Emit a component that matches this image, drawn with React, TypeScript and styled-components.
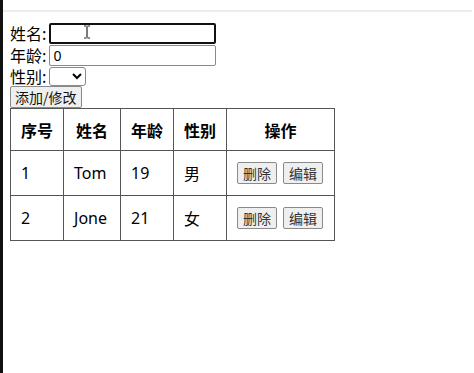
import React, { useState } from "react";
import styled, { createGlobalStyle } from "styled-components";

const GlobalStyle = createGlobalStyle`
  html, body {
    margin: 0;
    padding: 0;
    background: #ffffff;
  }
  body {
    font-family: "Noto Sans", "Noto Sans CJK SC", sans-serif;
    color: #000;
  }
`;

type Person = { id: number; name: string; age: number; sex: string };

const initial: Person[] = [
  { id: 1, name: "Tom", age: 19, sex: "男" },
  { id: 2, name: "Jone", age: 21, sex: "女" },
];

const App: React.FC = () => {
  const [list] = useState<Person[]>(initial);
  const [age, setAge] = useState("0");

  return (
    <>
      <GlobalStyle />
      <Frame>
        <TopStrip />
        <Page>
          <Field>
            <Label>姓名:</Label>
            <InputWrap>
              <TextInput focused autoFocus defaultValue="" />
              <IBeam viewBox="0 0 8 14">
                <path d="M1 1h2.5M4.5 1H7M4 1.5v11M1 13h2.5M4.5 13H7" stroke="#222" strokeWidth="1.2" fill="none" />
              </IBeam>
            </InputWrap>
          </Field>
          <Field>
            <Label>年龄:</Label>
            <TextInput value={age} onChange={(e) => setAge(e.target.value)} />
          </Field>
          <Field short>
            <Label>性别:</Label>
            <Select defaultValue="">
              <option value=""></option>
              <option value="男">男</option>
              <option value="女">女</option>
            </Select>
          </Field>
          <Button>添加/修改</Button>
          <Table>
            <thead>
              <tr>
                <Th w={32}>序号</Th>
                <Th w={36}>姓名</Th>
                <Th w={30}>年龄</Th>
                <Th w={32}>性别</Th>
                <Th w={87}>操作</Th>
              </tr>
            </thead>
            <tbody>
              {list.map((p) => (
                <tr key={p.id}>
                  <Td>{p.id}</Td>
                  <Td>{p.name}</Td>
                  <Td>{p.age}</Td>
                  <Td>{p.sex}</Td>
                  <Td>
                    <Actions>
                      <SmallButton>删除</SmallButton>
                      <SmallButton>编辑</SmallButton>
                    </Actions>
                  </Td>
                </tr>
              ))}
            </tbody>
          </Table>
        </Page>
      </Frame>
    </>
  );
};

export default App;

const Frame = styled.div`
  width: 474px;
  height: 373px;
  box-sizing: border-box;
  border-left: 3px solid #111;
  overflow: hidden;
`;

const TopStrip = styled.div`
  height: 10px;
  border-bottom: 2px solid #ececec;
  margin-right: 2px;
`;

const Page = styled.div`
  padding: 10px 0 0 7px;
  display: flex;
  flex-direction: column;
  align-items: flex-start;
`;

const Field = styled.div<{ short?: boolean }>`
  display: flex;
  align-items: center;
  height: ${(p) => (p.short ? 20 : 22)}px;
`;

const Label = styled.span`
  font-size: 16px;
  line-height: 1;
  font-family: "Noto Sans CJK SC", sans-serif;
  margin-right: 3px;
  white-space: nowrap;
`;

const InputWrap = styled.div`
  position: relative;
  display: flex;
`;

const TextInput = styled.input<{ focused?: boolean }>`
  box-sizing: border-box;
  width: 167px;
  height: 21px;
  padding: 0 3px;
  font-size: 14px;
  font-family: "Noto Sans", sans-serif;
  border: ${(p) => (p.focused ? "2px solid #111" : "1px solid #8a8a8a")};
  border-radius: 2px;
  outline: none;
  background: #fff;
`;

const IBeam = styled.svg`
  position: absolute;
  left: 34px;
  top: 2px;
  width: 8px;
  height: 14px;
`;

const Select = styled.select`
  box-sizing: border-box;
  width: 37px;
  height: 19px;
  border: 1px solid #8a8a8a;
  border-radius: 3px;
  background: #fff;
  font-size: 13px;
`;

const Button = styled.button`
  box-sizing: border-box;
  height: 22px;
  padding: 0 4px;
  font-size: 14px;
  line-height: 20px;
  font-family: "Noto Sans CJK SC", sans-serif;
  background: #efefef;
  border: 1px solid #8a8a8a;
  border-radius: 2px;
  color: #111;
`;

const Table = styled.table`
  border-collapse: collapse;
  border: 1px solid #555;
  font-size: 16px;
  font-family: "Noto Sans", "Noto Sans CJK SC", sans-serif;
`;

const Th = styled.th<{ w: number }>`
  width: ${(p) => p.w}px;
  height: 41px;
  padding: 0 10px;
  border: 1px solid #555;
  font-weight: bold;
  font-family: "Noto Sans CJK SC", sans-serif;
  text-align: center;
  white-space: nowrap;
`;

const Td = styled.td`
  height: 44px;
  padding: 0 10px;
  border: 1px solid #555;
  text-align: left;
  white-space: nowrap;
`;

const Actions = styled.div`
  display: flex;
  gap: 6px;
`;

const SmallButton = styled.button`
  box-sizing: border-box;
  height: 22px;
  padding: 0 5px;
  font-size: 14px;
  line-height: 20px;
  font-family: "Noto Sans CJK SC", sans-serif;
  color: #333;
  background: #efefef;
  border: 1px solid #8a8a8a;
  border-radius: 2px;
`;
